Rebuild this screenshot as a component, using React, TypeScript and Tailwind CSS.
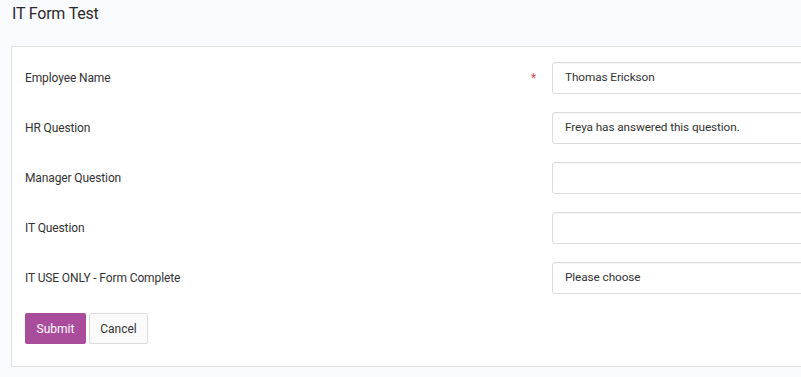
import React from "react";

const rows = [
  { label: "Employee Name", required: true, value: "Thomas Erickson" },
  { label: "HR Question", required: false, value: "Freya has answered this question." },
  { label: "Manager Question", required: false, value: "" },
  { label: "IT Question", required: false, value: "" },
  { label: "IT USE ONLY - Form Complete", required: false, value: "Please choose" },
];

export default function App() {
  return (
    <div
      className="w-[801px] h-[377px] overflow-hidden bg-[#f9fafd] text-[#333]"
      style={{ fontFamily: "Roboto, 'Liberation Sans', sans-serif" }}
    >
      <div className="pl-[12px] pt-[4px] h-[46px] text-[16px] leading-[20px] tracking-[-0.2px] text-[#2a2a2a]">IT Form Test</div>
      <div className="ml-[11px] w-[830px] bg-white border border-[#dedede] pt-[15px] pb-[22px] pl-[13px]">
        <div className="flex flex-col gap-[18px]">
          {rows.map((r) => (
            <div key={r.label} className="flex items-center h-[32px]">
              <div className="w-[502px] shrink-0 text-[12px] leading-[14px] tracking-[-0.12px]">{r.label}</div>
              <div className="w-[25px] shrink-0 text-[#e04a4a] text-[12px] leading-[14px] pl-[4px]">{r.required ? "*" : ""}</div>
              <div className="w-[300px] shrink-0 h-[32px] border border-[#dcdcdc] rounded-[3px] shadow-[inset_0_1px_1px_rgba(0,0,0,0.04)] flex items-center pl-[12px] text-[11.8px] tracking-[-0.1px]">
                {r.value}
              </div>
            </div>
          ))}
        </div>
        <div className="flex gap-[3px] mt-[19px]">
          <button className="w-[61px] h-[31px] bg-[#a94c9b] text-white text-[12px] rounded-[2px]">Submit</button>
          <button className="w-[59px] h-[31px] bg-[#fafafa] border border-[#dcdcdc] text-[#333] text-[12px] rounded-[2px]">Cancel</button>
        </div>
      </div>
    </div>
  );
}
